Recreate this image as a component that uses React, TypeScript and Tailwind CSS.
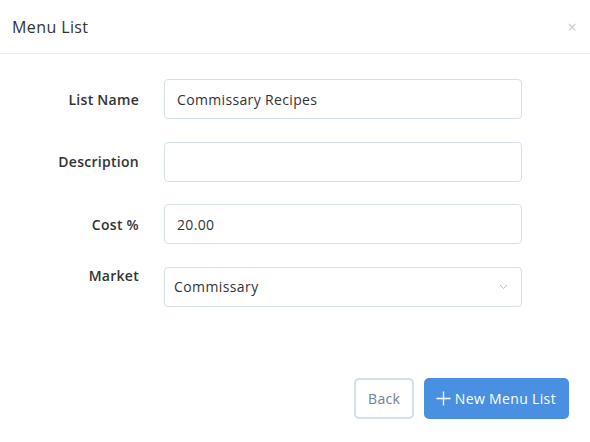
import React from "react";

const font = { fontFamily: "'Open Sans', 'Noto Sans', sans-serif" };

function Row({
  label,
  children,
  top = false,
}: {
  label: string;
  children: React.ReactNode;
  top?: boolean;
}) {
  return (
    <div className={`flex ${top ? "items-start" : "items-center"}`}>
      <label
        className={`w-[164px] shrink-0 pr-[25px] text-right text-[14px] font-semibold text-[#333] tracking-[0.02em] ${
          top ? "leading-[18px]" : ""
        }`}
      >
        {label}
      </label>
      <div className="w-[358px]">{children}</div>
    </div>
  );
}

export default function App() {
  return (
    <div className="w-[590px] h-[442px] bg-white text-[#333] tracking-[0.025em]" style={font}>
      {/* HEADER */}
      <div className="flex items-center justify-between h-[54px] pl-[12px] pr-[13px] border-b border-[#e6ecf2]">
        <h1 className="text-[16px] text-[#333]">Menu List</h1>
        <span className="text-[16px] leading-none text-[#c3ccd6]">×</span>
      </div>

      {/* FORM */}
      <div className="flex flex-col gap-[22.6px] pt-[25px]">
        <Row label="List Name">
          <input
            defaultValue="Commissary Recipes"
            className="w-full h-[40px] px-[12px] rounded-[4px] border border-[#d6e0ec] text-[14px] text-[#333] tracking-[0.025em] outline-none"
          />
        </Row>
        <Row label="Description">
          <input className="w-full h-[40px] px-[12px] rounded-[4px] border border-[#d6e0ec] text-[14px] outline-none" />
        </Row>
        <Row label="Cost %">
          <input
            defaultValue="20.00"
            className="w-full h-[40px] px-[12px] rounded-[4px] border border-[#d6e0ec] text-[14px] text-[#333] tracking-[0.025em] outline-none"
          />
        </Row>
        <Row label="Market" top>
          <div className="flex items-center justify-between h-[40px] pl-[9px] pr-[13px] rounded-[4px] border border-[#d6e0ec] text-[14px] text-[#333]">
            <span>Commissary</span>
            <svg width="9" height="6" viewBox="0 0 9 6" fill="none">
              <path d="M1 1l3.5 3.5L8 1" stroke="#b8c2cc" strokeWidth="1" />
            </svg>
          </div>
        </Row>
      </div>

      {/* FOOTER */}
      <div className="flex justify-end gap-[10px] pt-[71px] pr-[21px]">
        <button className="h-[41px] px-[11.5px] rounded-[5px] border-2 border-[#d4dfec] text-[14px] text-[#6f819b] bg-white tracking-[0.025em]">
          Back
        </button>
        <button className="flex items-center gap-[4px] h-[41px] pl-[12px] pr-[13px] rounded-[5px] bg-[#4a90e2] text-[14px] text-white tracking-[0.025em]">
          <svg width="15" height="15" viewBox="0 0 15 15" fill="none">
            <path d="M7.5 0.5v14M0.5 7.5h14" stroke="white" strokeWidth="1.3" />
          </svg>
          New Menu List
        </button>
      </div>
    </div>
  );
}
